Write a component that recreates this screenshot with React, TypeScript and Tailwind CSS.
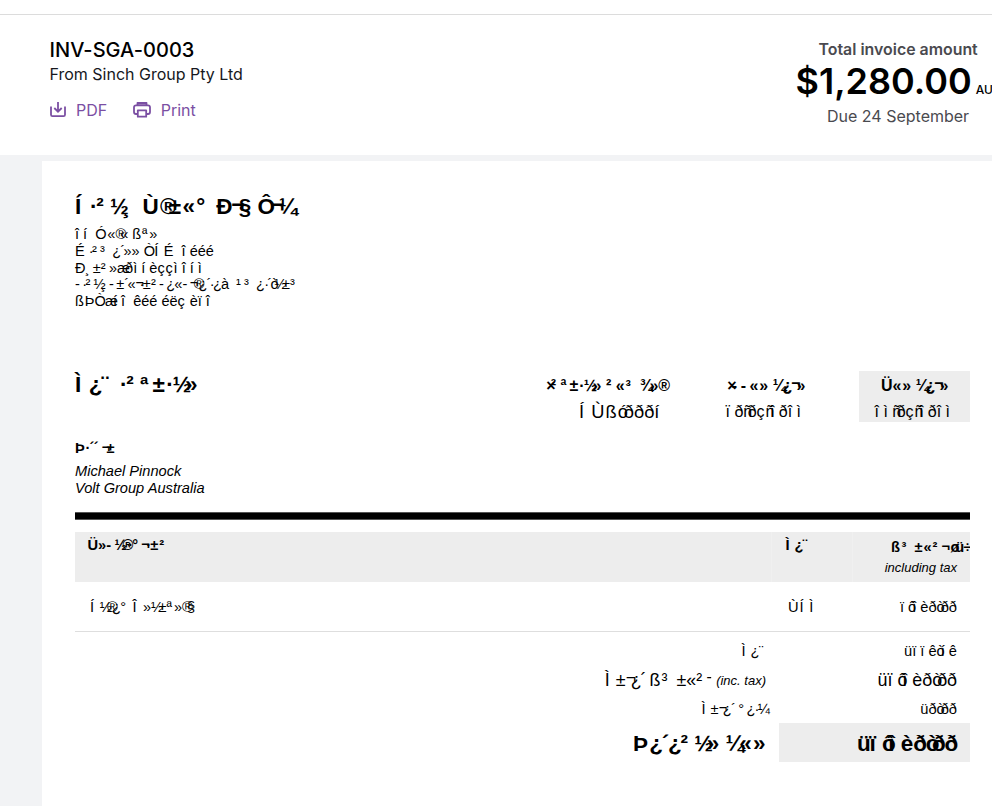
import type { ReactNode } from "react";

// Advance widths in thousandths of an em, keyed by the glyph that is drawn.
const REGULAR: Record<string, number> = {
  " ": 278, "Í": 667, "·": 222, "²": 556, "½": 500, "¸": 556, "Ù": 778, "®": 333, "±": 556, "«": 556,
  "°": 556, "Ð": 667, "¬": 278, "§": 500, "Ô": 556, "¼": 556, "Ó": 833, "ß": 667, "ª": 500, "»": 556,
  "É": 944, "³": 833, "¿": 556, "´": 222, "Ò": 722, "æ": 278, "-": 500, "à": 1015, "¹": 556, "ò": 278,
  "Þ": 667, "Ì": 611, "¨": 500, "×": 278, "¾": 556, "ó": 333, "ñ": 278, "Ü": 722, "Î": 722, "ô": 278,
  "ø": 333, "÷": 333,
};
const BOLD: Record<string, number> = {
  ...REGULAR,
  "·": 278, "²": 611, "½": 556, "¸": 611, "®": 389, "±": 611, "«": 611, "°": 611, "¬": 333, "§": 556,
  "Ô": 611, "¼": 611, "ß": 722, "ª": 556, "³": 889, "´": 278, "-": 556, "Þ": 722, "¨": 556, "¾": 611,
};

function Glyphs({ text, bold = false, clipLast = false }: { text: string; bold?: boolean; clipLast?: boolean }) {
  const table = bold ? BOLD : REGULAR;
  return (
    <span className={`inline-block whitespace-nowrap ${bold ? "font-bold" : ""}`}>
      {[...text].map((ch, i) => (
        <span
          key={i}
          className={`inline-block whitespace-pre text-left ${ch === "¬" ? "-translate-y-[0.1em]" : ""} ${clipLast && i === text.length - 1 ? "[clip-path:inset(0)]" : ""}`}
          style={{ width: `${(table[ch] ?? 556) / 1000}em` }}
        >
          {ch}
        </span>
      ))}
    </span>
  );
}

function Meta({ label, value, className = "", labelClass = "", valueClass = "text-[16px]" }: { label: string; value: string; className?: string; labelClass?: string; valueClass?: string }) {
  return (
    <div className={`flex h-[51px] flex-col items-end pt-[3px] ${className}`}>
      <div className={`h-[26px] text-[16px] leading-6 ${labelClass}`}><Glyphs bold text={label} /></div>
      <div className={`h-[22px] leading-6 ${valueClass}`}><Glyphs text={value} /></div>
    </div>
  );
}

function TotalRow({ label, value, className = "" }: { label: ReactNode; value: ReactNode; className?: string }) {
  return (
    <div className={`flex ${className}`}>
      <div className="w-[691px] text-right whitespace-nowrap">{label}</div>
      <div className="w-[191px] text-right whitespace-nowrap">{value}</div>
    </div>
  );
}

const ADDRESS = ["îí Ó«®« ßª»", "É·²³¿´»» ÒÍÉ îééé", "Ð¸±²»æ ðìíèççìîíì", "-·²½¸-±´«¬·±²-¿«-¬®¿´·¿à¹³¿·´ò½±³", "ßÞÒæ íî êéé éëç èïî"];

export default function App() {
  return (
    <div className="h-[806px] w-[992px] overflow-hidden bg-[#f2f3f5] font-['Inter',sans-serif] text-black">
      <div className="h-[15px] border-b border-[#dcdcdc] bg-white" />
      <header className="flex h-[140px] justify-between bg-white pl-[49.5px]">
        <div className="pt-[22px]">
          <h1 className="text-[20px] leading-[26px] font-[550] tracking-[0.05px]">INV-SGA-0003</h1>
          <p className="-mt-px text-[16px] leading-6 text-[#16181d]">From Sinch Group Pty Ltd</p>
          <div className="mt-3 flex items-center text-[16px] leading-6 text-[#7b4fa3]">
            <svg className="mr-[10.5px] h-4 w-4" viewBox="0 0 16 16" fill="none" stroke="currentColor" strokeWidth="1.8">
              <path d="M1 4.5v8.2q0 1.5 1.5 1.5h11q1.5 0 1.5-1.5V4.5M8 0v9.5M4.3 6 8 9.7 11.7 6" />
            </svg>
            <span>PDF</span>
            <svg className="mr-[9.5px] ml-[26px] h-[18px] w-[18px]" viewBox="0 0 18 18" fill="none" stroke="currentColor" strokeWidth="1.8" strokeLinejoin="round">
              <path d="M4.5 4.2V1.8h9v2.4M4.5 13H3Q1 13 1 11V6.3q0-2 2-2h12q2 0 2 2V11q0 2-2 2H13.5M4.8 9.3h8.4v6.4H4.8z" />
              <path d="M4.5 1h9v2.6h-9z" fill="currentColor" stroke="none" />
            </svg>
            <span>Print</span>
          </div>
        </div>
        <div className="flex w-[196.5px] flex-col pt-[23px] whitespace-nowrap">
          <div className="ml-[23px] h-[23px] text-[15.9px] leading-6 font-semibold text-[#4a4a4f]">Total invoice amount</div>
          <div className="flex items-baseline">
            <span className="text-[36px] leading-10 font-semibold">$1,280.00</span>
            <span className="ml-[4px] text-[12px] font-medium">AUD</span>
          </div>
          <div className="mt-[3px] ml-[31.5px] text-[16px] leading-6 text-[#4a4a4f]">Due 24 September</div>
        </div>
      </header>

      <main className="mt-[6px] ml-[42px] h-[645px] bg-white pt-[32px] pl-[33px] font-['Liberation_Sans',Arial,sans-serif]">
        <div className="w-[895px]">
          <div className="h-[27px] text-[22.5px] leading-7"><Glyphs bold text="Í·²½¸ Ù®±«° Ð¬§ Ô¬¼" /></div>
          <div className="mt-[6px] h-[84px] text-[14.55px] leading-[16.75px]">
            {ADDRESS.map((line) => (
              <div key={line} className="h-[16.75px]"><Glyphs text={line} /></div>
            ))}
          </div>

          <div className="mt-[61px] flex h-[51px]">
            <div className="flex-1 text-[22.5px] leading-7"><Glyphs bold text="Ì¿¨ ·²ª±·½»" /></div>
            <Meta label="×²ª±·½» ²«³¾»®" value="ÍÙßóðððí" valueClass="text-[18.3px]" className="mr-[61px]" />
            <Meta label="×--«» ¼¿¬»" value="ïðñðçñîðîì" className="mr-[53.5px]" />
            <Meta label="Ü«» ¼¿¬»" value="îìñðçñîðîì" labelClass="mr-[6px]" className="w-[111px] bg-[#ededed] pr-[15.5px]" />
          </div>

          <div className="mt-[18px] text-[14.6px] leading-[17px]">
            <div className="h-[22.5px]"><Glyphs bold text="Þ·´´ ¬±" /></div>
            <div className="italic">Michael Pinnock</div>
            <div className="italic">Volt Group Australia</div>
          </div>

          <div className="mt-[15.5px] h-[8px] border-y border-[#555] bg-black" />

          <div className="mt-[12px] flex h-[50px] overflow-hidden bg-[#ededed] text-[14.67px] leading-5">
            <div className="w-[697px] border-r border-[#f0f0f0] pt-[3px] pl-[12.5px]"><Glyphs bold text="Ü»-½®·°¬·±²" /></div>
            <div className="w-[81px] border-r border-[#f0f0f0] pt-[3px] pl-[13.5px]"><Glyphs bold text="Ì¿¨" /></div>
            <div className="w-[117px] pt-[5px]">
              <div className="h-[21px] pl-[38px]"><Glyphs bold text="ß³±«²¬ øü÷" /></div>
              <div className="pr-[13px] text-right text-[13px] italic">including tax</div>
            </div>
          </div>

          <div className="flex h-[50px] border-b border-[#dedede] pt-[15px] text-[14.67px] leading-5">
            <div className="w-[697px] pl-[15px]"><Glyphs text="Í½®¿° Î»½±ª»®§" /></div>
            <div className="w-[81px] pl-[16px]"><Glyphs text="ÙÍÌ" /></div>
            <div className="w-[117px] pr-[13px] text-right"><Glyphs text="ïôîèðòðð" /></div>
          </div>

          <TotalRow className="mt-[4px] h-7 pt-[5px] text-[14.67px] leading-5" label={<Glyphs text="Ì¿¨" />} value={<Glyphs text="üïïêòíê" />} />
          <TotalRow className="h-[29px] pt-[2px] text-[17.9px] leading-7" label={<><Glyphs clipLast text="Ì±¬¿´ ß³±«²¬" /><span className="relative -top-px ml-[5px] text-[13px] italic">(inc. tax)</span></>} value={<Glyphs text="üïôîèðòðð" />} />
          <TotalRow className="h-[30px] pt-[6px] text-[14.67px] leading-5" label={<Glyphs text="Ì±¬¿´ °¿·¼" />} value={<Glyphs text="üðòðð" />} />
          <div className="flex h-[39px] text-[22.5px] leading-[41px]">
            <div className="w-[690.5px] text-right"><Glyphs bold text="Þ¿´¿²½» ¼«»" /></div>
            <div className="ml-[13.5px] w-[191px] bg-[#ededed] pr-[13px] text-right"><Glyphs bold text="üïôîèðòðð" /></div>
          </div>
        </div>
      </main>
    </div>
  );
}
